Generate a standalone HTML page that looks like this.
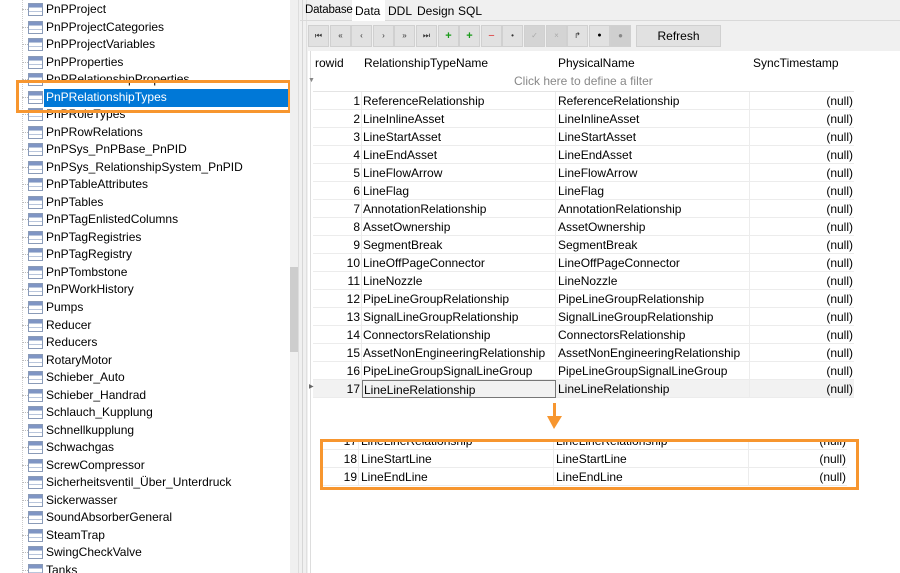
<!DOCTYPE html>
<html><head><meta charset="utf-8"><style>
*{margin:0;padding:0;box-sizing:border-box}
html,body{width:900px;height:573px;overflow:hidden}
body{background:#f0f0f0;font-family:"Liberation Sans",sans-serif;font-size:12px;color:#000;position:relative}
.a{position:absolute;white-space:nowrap}
.ti{position:absolute;left:0;height:17px;line-height:17px}
.ic{position:absolute;left:28px;top:2px;width:15px;height:13px;border:1px solid #8a9bb8;background:repeating-linear-gradient(#fff 0 3px,#b9c6dc 3px 4px);}
.ic:before{content:"";position:absolute;left:0;right:0;top:0;height:3px;background:#7f95c4}
.tl{position:absolute;left:22px;top:8px;width:6px;border-top:1px dotted #bbb}
.tt{position:absolute;left:46px;top:0}
.btn{position:absolute;top:25px;width:21px;height:22px;background:#e1e1e1;border:1px solid #d0d0d0;text-align:center;line-height:20px;font-size:8px;color:#333}
.r{position:absolute;height:18px;line-height:18px;border-bottom:1px solid #ececec}
.c{position:absolute;top:0;height:18px;border-right:1px solid #ececec;overflow:hidden}
</style></head><body>
<div class="a" style="left:0;top:0;width:290px;height:573px;background:#fff"></div>
<div class="a" style="left:22px;top:0;width:0;height:573px;border-left:1px dotted #ccc"></div>
<div class="a" style="left:44px;top:89px;width:245px;height:18px;background:#0078d7"></div>
<div id="tree"></div>
<div class="a" style="left:16px;top:80px;width:275px;height:33px;border:3px solid #f7962f"></div>
<div class="a" style="left:290px;top:0;width:9px;height:573px;background:#f0f0f0"></div>
<div class="a" style="left:290px;top:267px;width:8px;height:85px;background:#cdcdcd"></div>
<div class="a" style="left:298px;top:0;width:1px;height:573px;background:#ddd"></div>
<div class="a" style="left:302px;top:0;width:1px;height:573px;background:#d6d6d6"></div>
<div class="a" style="left:306px;top:0;width:1px;height:573px;background:#e0e0e0"></div>
<div class="a" style="left:300px;top:20px;width:600px;height:1px;background:#d9d9d9"></div>
<div class="a" style="left:352px;top:0;width:33px;height:21px;background:#fff"></div>
<div class="a" style="left:305px;top:4px;font-size:11.5px;letter-spacing:-0.2px">Database</div>
<div class="a" style="left:355px;top:4px;font-size:12px">Data</div>
<div class="a" style="left:388px;top:4px;font-size:12px">DDL</div>
<div class="a" style="left:417px;top:4px;font-size:12px">Design</div>
<div class="a" style="left:458px;top:4px;font-size:12px">SQL</div>
<div id="tb"></div>
<div class="a" style="left:636px;top:25px;width:85px;height:22px;background:#e1e1e1;border:1px solid #d0d0d0;text-align:center;line-height:20px">Refresh</div>
<div class="a" style="left:308px;top:51px;width:592px;height:522px;background:#fff"></div>
<div class="a" style="left:310px;top:51px;width:1px;height:522px;background:#ddd"></div>
<div class="a" style="left:315px;top:56px">rowid</div>
<div class="a" style="left:364px;top:56px">RelationshipTypeName</div>
<div class="a" style="left:558px;top:56px">PhysicalName</div>
<div class="a" style="left:753px;top:56px">SyncTimestamp</div>
<div class="a" style="left:514px;top:74px;color:#888">Click here to define a filter</div>
<div class="a" style="left:308px;top:77px;font-size:7px;color:#888">▼</div>
<div class="a" style="left:313px;top:91px;width:541px;height:1px;background:#e4e4e4"></div>
<div id="rows"></div>
<div class="a" style="left:553px;top:403px;width:3px;height:14px;background:#f7962f"></div>
<div class="a" style="left:547px;top:416px;width:0;height:0;border-left:7px solid transparent;border-right:8px solid transparent;border-top:13px solid #f7962f"></div>
<div class="a" style="left:320px;top:439px;width:539px;height:51px;border:3px solid #f7962f;background:#fff;overflow:hidden">
 <div id="low"></div>
</div>
<script>
var t=["PnPProject","PnPProjectCategories","PnPProjectVariables","PnPProperties","PnPRelationshipProperties","PnPRelationshipTypes","PnPRoleTypes","PnPRowRelations","PnPSys_PnPBase_PnPID","PnPSys_RelationshipSystem_PnPID","PnPTableAttributes","PnPTables","PnPTagEnlistedColumns","PnPTagRegistries","PnPTagRegistry","PnPTombstone","PnPWorkHistory","Pumps","Reducer","Reducers","RotaryMotor","Schieber_Auto","Schieber_Handrad","Schlauch_Kupplung","Schnellkupplung","Schwachgas","ScrewCompressor","Sicherheitsventil_Über_Unterdruck","Sickerwasser","SoundAbsorberGeneral","SteamTrap","SwingCheckValve","Tanks"];
var h="";t.forEach(function(n,i){var y=Math.round(1+i*17.53);h+='<div class="ti" style="top:'+y+'px;width:290px"><div class="tl"></div><div class="ic"></div><div class="tt" style="'+(i==5?'color:#fff':'')+'">'+n+'</div></div>'});
document.getElementById("tree").innerHTML=h;
var g=["⏮","«","‹","›","»","⏭","+","+","−","•","✓","×","↱","●","●"];h="";
g.forEach(function(s,i){var x=Math.round(308+i*21.6);var st='left:'+x+'px;';if(i==6||i==7)st+='color:#1a9a1a;font-size:11px;font-weight:bold;';if(i==8)st+='color:#d33;font-size:11px;';if(i==10||i==11)st+='color:#aaa;background:#d4d4d4;';if(i==14)st+='background:#cfcfcf;color:#888;';if(i==13)st+='font-size:7px;color:#000;';h+='<div class="btn" style="'+st+'">'+s+'</div>'});
document.getElementById("tb").innerHTML=h;
var d=["ReferenceRelationship","LineInlineAsset","LineStartAsset","LineEndAsset","LineFlowArrow","LineFlag","AnnotationRelationship","AssetOwnership","SegmentBreak","LineOffPageConnector","LineNozzle","PipeLineGroupRelationship","SignalLineGroupRelationship","ConnectorsRelationship","AssetNonEngineeringRelationship","PipeLineGroupSignalLineGroup","LineLineRelationship"];
h="";d.forEach(function(n,i){var y=92+i*18;var bg=i==16?'background:#f2f2f2;':'';
h+='<div class="r" style="left:313px;top:'+y+'px;width:541px;'+bg+'"><div class="c" style="left:0;width:49px;text-align:right;padding-right:1px">'+(i+1)+'</div><div class="c" style="left:49px;width:194px;padding-left:1px;'+(i==16?'border:1px solid #777;':'')+'">'+n+'</div><div class="c" style="left:243px;width:194px;padding-left:2px">'+n+'</div><div class="c" style="left:437px;width:104px;text-align:right;padding-right:1px;border-right:none">(null)</div></div>'});
document.getElementById("rows").innerHTML=h+'<div class="a" style="left:309px;top:383px;font-size:6px;color:#666">▶</div>';
var L=[[17,"LineLineRelationship",-7],[18,"LineStartLine",11],[19,"LineEndLine",29]];h="";
L.forEach(function(r){h+='<div class="r" style="left:0;top:'+(r[2]-3)+'px;width:524px"><div class="c" style="left:0;width:36px;text-align:right;padding-right:1px">'+r[0]+'</div><div class="c" style="left:36px;width:195px;padding-left:2px">'+r[1]+'</div><div class="c" style="left:231px;width:195px;padding-left:2px">'+r[1]+'</div><div class="c" style="left:426px;width:98px;text-align:right;padding-right:1px;border-right:none">(null)</div></div>'});
document.getElementById("low").innerHTML=h;
</script>
</body></html>
